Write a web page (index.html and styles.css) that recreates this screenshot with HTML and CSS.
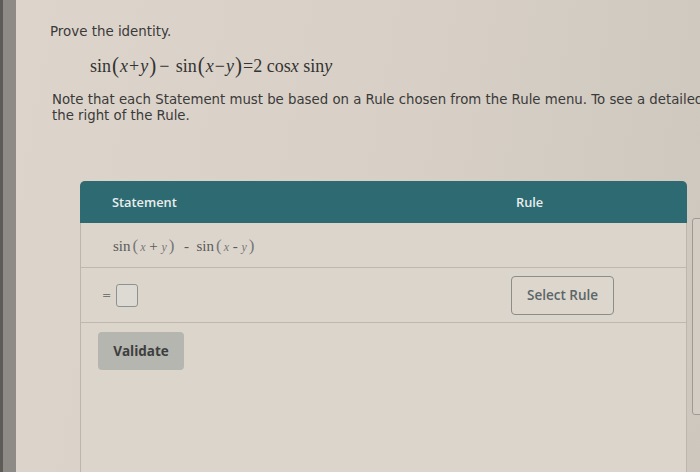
FILE: index.html
```html
<!DOCTYPE html>
<html>
<head>
<meta charset="utf-8">
<link rel="stylesheet" href="styles.css">
</head>
<body>
<div class="screen">
  <div class="bezel"><div class="bezel-edge"></div></div>
  <div class="main">
    <p class="title">Prove the identity.</p>
    <div class="formula">sin<span class="paren">(</span><i>x</i><span class="op">+</span><i>y</i><span class="paren">)</span><span class="minus">−</span> sin<span class="paren">(</span><i>x</i><span class="op">−</span><i>y</i><span class="paren">)</span>=2 cos<i>x</i> sin<i>y</i></div>
    <p class="note">Note that each Statement must be based on a Rule chosen from the Rule menu. To see a detailed description of a Rule, select the More Information Button to<br>the right of the Rule.</p>
    <div class="proof">
      <div class="head">
        <div class="col-st">Statement</div>
        <div class="col-rule">Rule</div>
      </div>
      <div class="row row-first">
        <div class="col-st expr">sin<span class="sp">(</span><i>x</i> + <i>y</i><span class="sp">)</span> &nbsp;-&nbsp; sin<span class="sp">(</span><i>x</i> - <i>y</i><span class="sp">)</span></div>
      </div>
      <div class="row row-input">
        <div class="col-st input-cell"><span class="eq">=</span><span class="box"></span></div>
        <div class="col-rule"><button class="select">Select Rule</button></div>
      </div>
      <div class="row row-last">
        <div class="col-st"><button class="validate">Validate</button></div>
      </div>
    </div>
  </div>
  <div class="side"></div>
</div>
</body>
</html>
```

FILE: styles.css
```css
html, body {
  margin: 0;
  padding: 0;
  width: 700px;
  height: 472px;
  overflow: hidden;
}
body {
  background: linear-gradient(100deg, #ddd5cb 0%, #d8d0c6 55%, #cdc7be 100%);
  font-family: "DejaVu Sans", Verdana, sans-serif;
  color: #3a3a3a;
}
.screen {
  display: flex;
  height: 472px;
  position: relative;
}
.bezel {
  width: 16px;
  flex: none;
  background: #8e8b86;
  display: flex;
}
.bezel-edge {
  width: 3px;
  background: #5e5c59;
}
.main {
  flex: 1;
  min-width: 0;
  overflow: hidden;
  padding-left: 34px;
  padding-top: 24px;
}
.title {
  margin: 0;
  font-size: 13.4px;
  line-height: 16px;
}
.formula {
  margin: 13px 0 0 40px;
  font-family: "Liberation Serif", "Times New Roman", serif;
  font-size: 18px;
  line-height: 24px;
  color: #333;
  white-space: nowrap;
}
.formula .paren {
  font-size: 21px;
  display: inline-block;
  transform: scaleY(1.1);
  margin: 0 1px;
}
.formula .op { margin: 0 1px; }
.formula .minus { margin: 0 2px; }
.note {
  margin: 14px 0 0 2px;
  font-size: 13.3px;
  line-height: 16px;
  white-space: nowrap;
  color: #3a3a3a;
}
.proof {
  margin: 57px 0 0 30px;
  width: 605px;
  border-right: 1px solid #bdb6ad;
  border-left: 1px solid #bdb6ad;
  border-radius: 5px 5px 0 0;
  background: #dcd5cc;
}
.head {
  display: flex;
  height: 42px;
  align-items: center;
  background: #2e6a72;
  border-radius: 5px 5px 0 0;
  color: #e9eeec;
  font-family: "Open Sans", Lato, sans-serif;
  font-weight: 600;
  font-size: 12.8px;
  margin: 0 -1px;
}
.col-st {
  width: 416px;
  flex: none;
  padding-left: 32px;
  box-sizing: border-box;
}
.col-rule {
  flex: 1;
  padding-left: 20px;
}
.row {
  display: flex;
  align-items: center;
  border-bottom: 1px solid #bfb8af;
}
.row-first {
  height: 44px;
}
.row-input {
  height: 54px;
}
.row-last {
  border-bottom: none;
  height: 149px;
  align-items: flex-start;
}
.expr {
  font-family: "Liberation Serif", "Times New Roman", serif;
  font-size: 15px;
  color: #5a5a5a;
  padding-top: 2px;
}
.expr i {
  font-size: 12px;
  color: #777;
}
.expr .sp {
  font-size: 17px;
  color: #777;
  margin: 0 2px;
}
.input-cell {
  padding-left: 21px;
  display: flex;
  align-items: center;
}
.eq {
  font-size: 11px;
  color: #777;
  margin-right: 5px;
}
.box {
  width: 22px;
  height: 23px;
  border: 1px solid #8d918f;
  border-radius: 3px;
  background: #dcdad2;
  box-sizing: border-box;
}
.select {
  margin-left: -6px;
  width: 103px;
  height: 39px;
  border: 1.5px solid #8c8c88;
  border-radius: 4px;
  background: #dcd6cd;
  font-family: "Open Sans", Lato, sans-serif;
  font-weight: 600;
  font-size: 13.5px;
  color: #5b6668;
}
.validate {
  margin: 9px 0 0 -15px;
  width: 86px;
  height: 38px;
  border: none;
  border-radius: 4px;
  background: #b4b6af;
  font-family: "Open Sans", Lato, sans-serif;
  font-weight: 700;
  font-size: 13.5px;
  color: #3e3e3e;
}
.side {
  position: absolute;
  left: 692px;
  top: 218px;
  width: 20px;
  height: 195px;
  border: 1px solid #9d9a95;
  border-radius: 3px;
  background: #d3cdc4;
}
```
